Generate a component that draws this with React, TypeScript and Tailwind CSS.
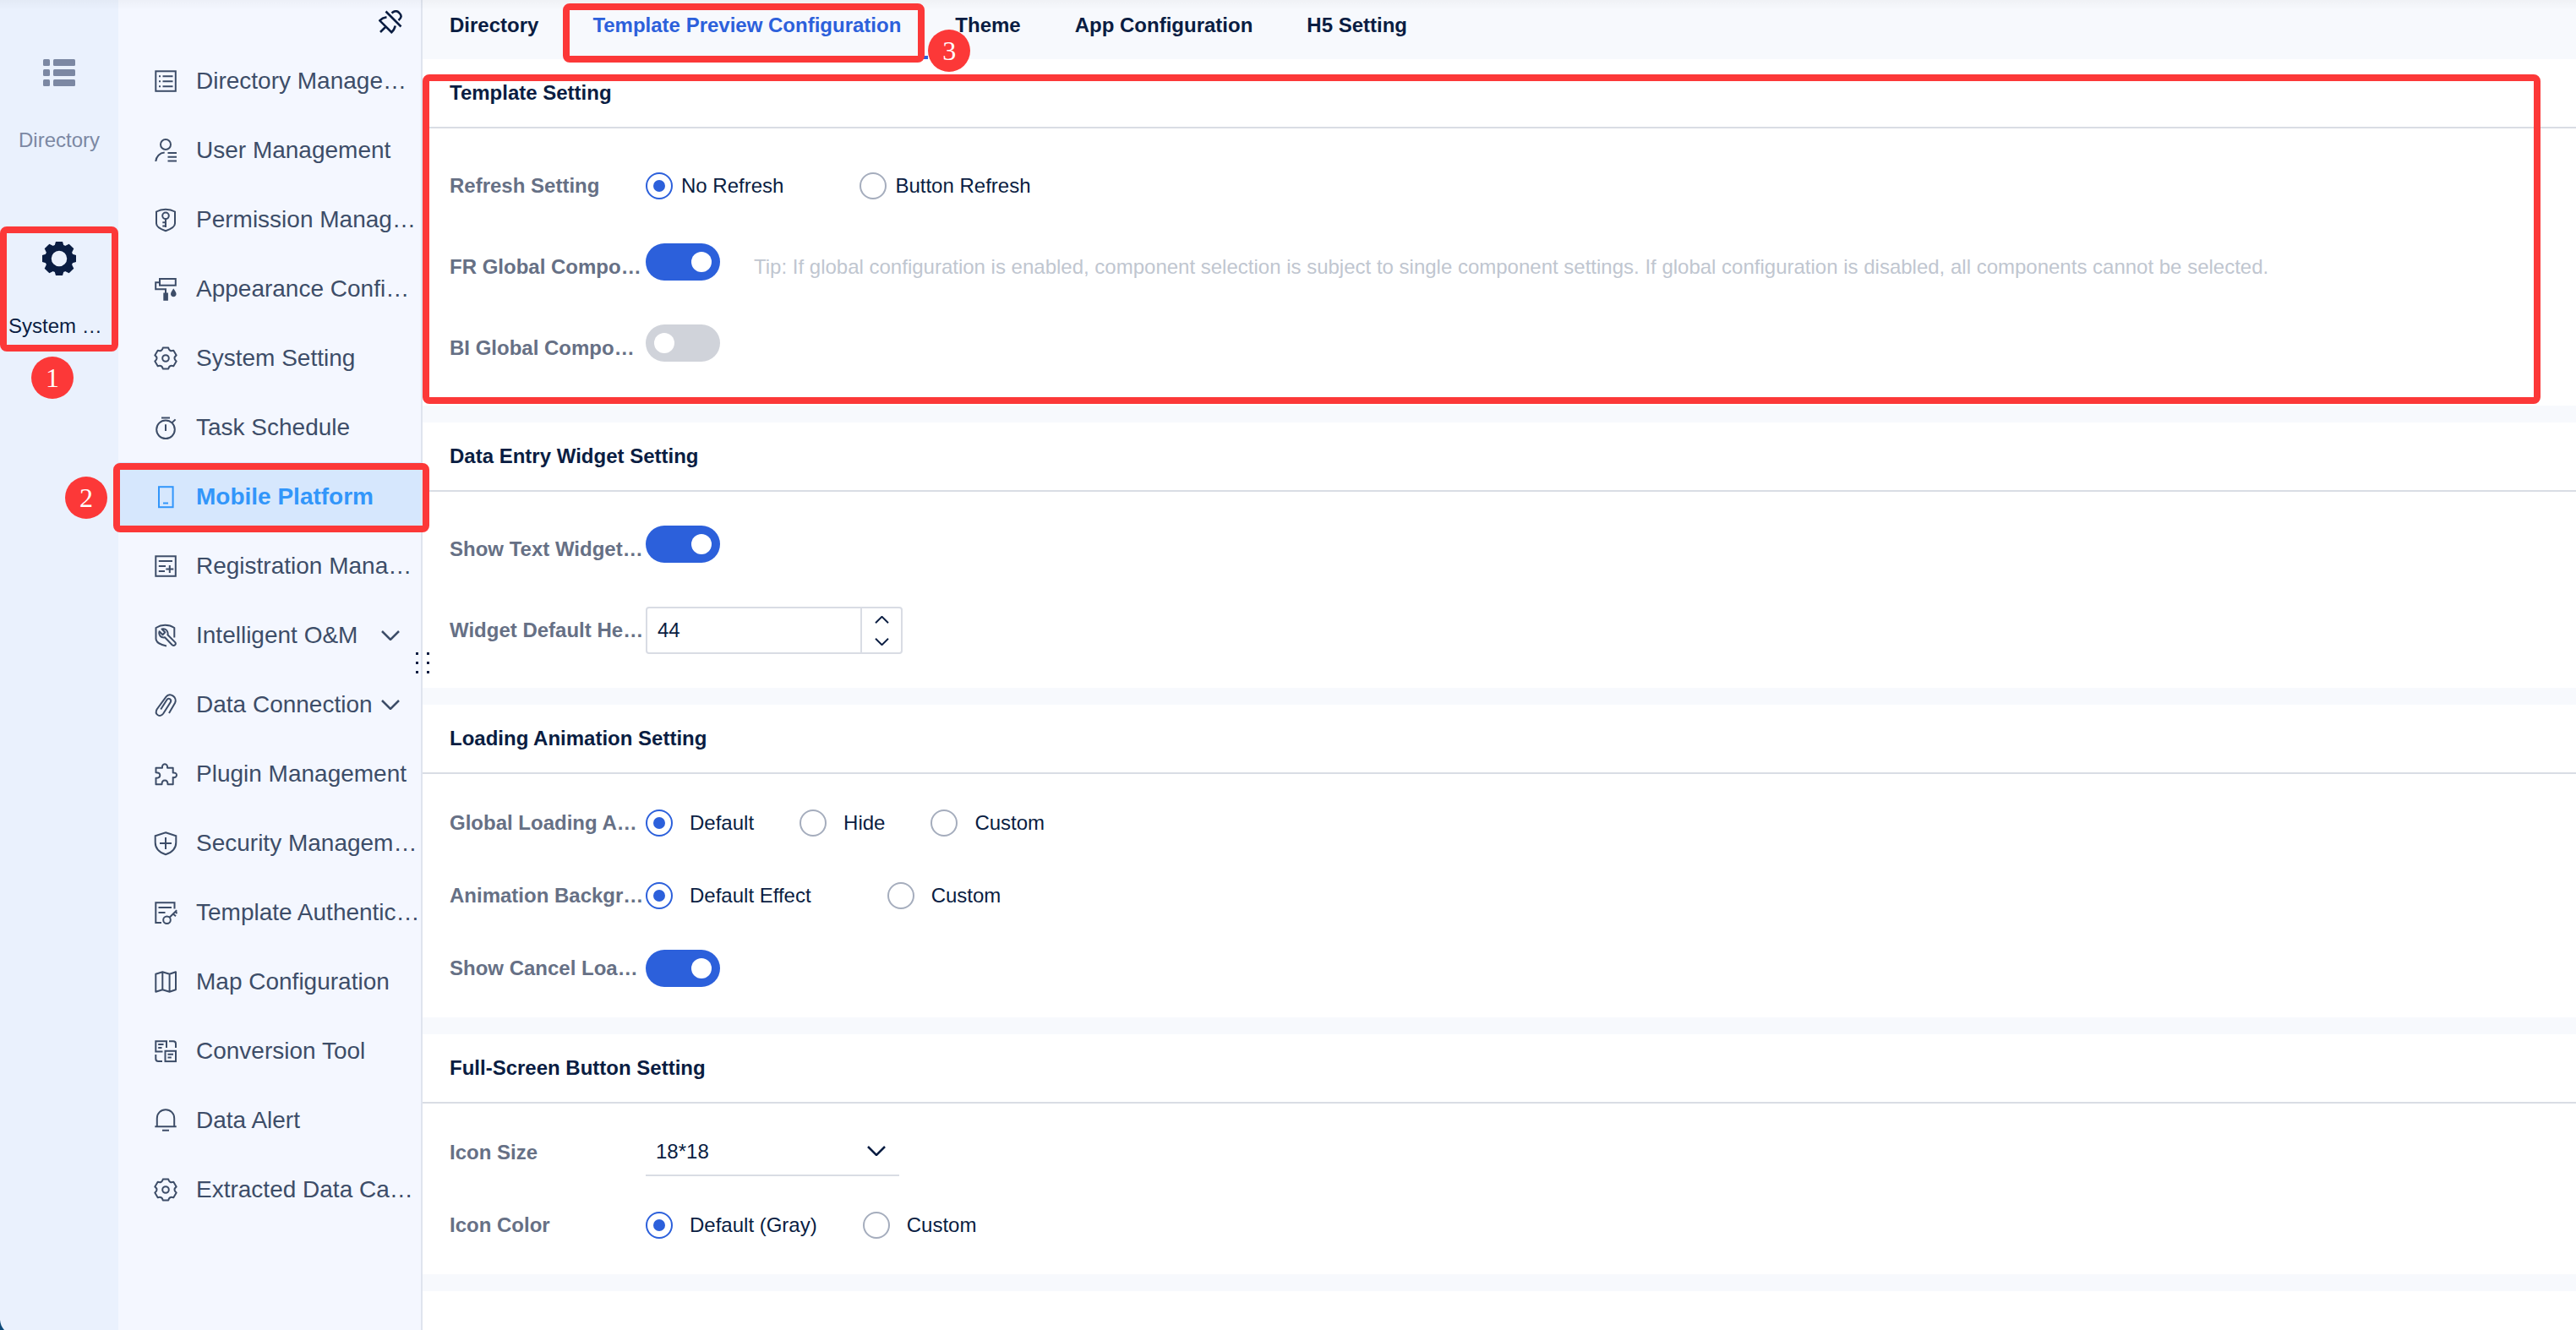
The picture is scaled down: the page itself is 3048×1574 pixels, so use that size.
import { useState } from "react";
import type { ReactNode } from "react";

function Icon({ children }: { children: ReactNode }) {
  return (
    <svg
      viewBox="0 0 26 26"
      fill="none"
      stroke="currentColor"
      strokeWidth="2"
      className="size-[26px] shrink-0 overflow-visible"
      aria-hidden="true"
    >
      {children}
    </svg>
  );
}

const gearOutline = (
  <>
    <path
      strokeLinejoin="round"
      d="M9.8 .5H16.2Q17.2 5.4 22.3 3.7L25.7 9.4Q21.2 13 25.7 16.6L22.3 22.3Q17.2 20.6 16.2 25.5H9.8Q8.8 20.6 3.7 22.3L.3 16.6Q4.8 13 .3 9.4L3.7 3.7Q8.8 5.4 9.8 .5Z"
    />
    <circle cx="13" cy="13" r="3.8" />
  </>
);

interface NavItem {
  label: string;
  icon: ReactNode;
  expandable?: boolean;
}

const navItems: NavItem[] = [
  {
    label: "Directory Manage…",
    icon: (
      <>
        <rect x="1.3" y="1.3" width="23.5" height="23.5" />
        <path d="M5 7.2H7M9.5 7.2H21.5M5 13.2H7M9.5 13.2H21.5M5 19.2H7M9.5 19.2H21.5" />
      </>
    ),
  },
  {
    label: "User Management",
    icon: (
      <>
        <circle cx="13" cy="6" r="6" />
        <path d="M1.3 26C1.8 20 6 16 11.7 15.6M15.5 16H26M15.5 20.8H26M15.5 25.4H26" />
      </>
    ),
  },
  {
    label: "Permission Manag…",
    icon: (
      <>
        <path d="M13 .8C17.5 .8 21 1.8 24 3.5V17.5C24 21.5 19.5 24 13 26.2C6.5 24 2 21.5 2 17.5V3.5C5 1.8 8.5 .8 13 .8Z" />
        <circle cx="13" cy="8.3" r="3.8" />
        <path d="M13 12V22M9.3 16.3H13M9.3 20.5H13" />
      </>
    ),
  },
  {
    label: "Appearance Confi…",
    icon: (
      <>
        <rect x="6" y="1" width="18.8" height="7.7" />
        <path d="M6 5.3H1.2V13.3H13V18" />
        <rect x="10.3" y="17.5" width="5.6" height="9.3" fill="currentColor" stroke="none" />
        <path
          d="M22.3 12.5C24 15 25.6 17 25.6 19C25.6 20.9 24.2 22.3 22.3 22.3C20.4 22.3 19 20.9 19 19C19 17 20.6 15 22.3 12.5Z"
          fill="currentColor"
          stroke="none"
        />
      </>
    ),
  },
  { label: "System Setting", icon: gearOutline },
  {
    label: "Task Schedule",
    icon: (
      <>
        <circle cx="13" cy="15.3" r="10.8" />
        <path d="M8 1.5H18M13 9.3V17M20.5 7.3L24.6 3.4" />
      </>
    ),
  },
  {
    label: "Mobile Platform",
    icon: (
      <>
        <rect x="5" y="1.2" width="16.6" height="24" />
        <path d="M10 20.5H16" />
      </>
    ),
  },
  {
    label: "Registration Mana…",
    icon: (
      <>
        <rect x="1.3" y="1.3" width="23.5" height="23.5" />
        <path d="M4.8 7H21M4.8 13H13M4.8 19H12M13.3 16.5H22.3M17.8 12V21" />
      </>
    ),
  },
  {
    label: "Intelligent O&M",
    expandable: true,
    icon: (
      <g strokeLinejoin="round">
        <path d="M14 25.5C7 24 1.5 21.5 1.5 17V4C5 1.8 8.5 .8 12.3 .8C16.2 .8 20 1.8 23.3 4V15.5" />
        <path d="M8.5 5.5L12.3 9.3L9.5 12.2L5.6 8.3C4.3 12.5 7.5 16.3 12 15.3L20.7 24.3C23 26.3 26.3 23.4 24.2 21.1L15.4 12.3C16.5 8 13 4.3 8.5 5.5Z" />
      </g>
    ),
  },
  {
    label: "Data Connection",
    expandable: true,
    icon: (
      <path d="M17 23L24 11C27.3 4.5 18.3 -2.3 13.5 3.6L2.6 18.5C-.6 24.5 6.3 28.8 10.2 23.5L18.9 9.8C20.3 6.3 16.3 4.2 14.4 7.2L7.2 18.5" />
    ),
  },
  {
    label: "Plugin Management",
    icon: (
      <path
        strokeLinejoin="round"
        d="M1.5 5.7H9C8.7 3 9.8 1.2 12 1.2C14.2 1.2 15.3 3 15 5.7H21.7V11.5C24.2 11.2 26 12.2 26 14.3C26 16.4 24.2 17.4 21.7 17.1V25.2H15.5C15.5 22.2 14.3 20.6 12 20.6C9.7 20.6 8.5 22.2 8.5 25.2H1.5V17.8C4.6 17.8 6.3 16.8 6.3 14.5C6.3 12.2 4.6 11.2 1.5 11.2Z"
      />
    ),
  },
  {
    label: "Security Managem…",
    icon: (
      <path d="M13 .3L25.3 4.2V12C25.3 19 20 24 13 26.3C6 24 .7 19 .7 12V4.2ZM13 6V20M6 13H20" />
    ),
  },
  {
    label: "Template Authentic…",
    icon: (
      <>
        <path d="M23.5 8.5V1.2H1.3V25H8M4.5 7H20M4.5 13H12.5" />
        <circle cx="14.5" cy="21.8" r="4.3" />
        <path d="M17.6 18.7L26.2 10.3M21.8 14.5L25 17.2M24.5 12L26.5 14" />
      </>
    ),
  },
  {
    label: "Map Configuration",
    icon: (
      <path
        strokeLinejoin="round"
        d="M1.3 3.8L9.3 1.3L17.6 3.8L25 1.3V22.3L17.6 24.8L9.3 22.3L1.3 24.8ZM9.3 1.3V22.3M17.6 3.8V24.8"
      />
    ),
  },
  {
    label: "Conversion Tool",
    icon: (
      <>
        <path d="M14 9V1.3H1.3V13.5H9.5M4.2 5H10.5M4.2 9H8.5" />
        <rect x="12.5" y="12.8" width="12.5" height="12.3" />
        <path d="M15.5 16.8H22M15.5 20.6H19.8M17 1.3H22C24 1.3 25 2.3 25 4.3V9M1.3 17V22C1.3 24 2.3 25 4.3 25H9" />
      </>
    ),
  },
  {
    label: "Data Alert",
    icon: (
      <path d="M2.8 20V10.5C2.8 4.5 7.3 .3 13 .3C18.7 .3 23.2 4.5 23.2 10.5V20M.3 20.3H25.7M9 24.8H17" />
    ),
  },
  { label: "Extracted Data Ca…", icon: gearOutline },
];

const tabs = [
  "Directory",
  "Template Preview Configuration",
  "Theme",
  "App Configuration",
  "H5 Setting",
];

function Chevron({ className, up = false }: { className: string; up?: boolean }) {
  return (
    <svg viewBox="0 0 22 12" fill="none" stroke="currentColor" strokeWidth="2.5" className={className} aria-hidden="true">
      <path d={up ? "M1 11L11 1L21 11" : "M1 1L11 11L21 1"} />
    </svg>
  );
}

/* Red callouts laid over the page */
function Outline({ className }: { className: string }) {
  return <div className={`pointer-events-none absolute z-20 rounded-lg border-8 border-[#fc3838] ${className}`} />;
}

function Step({ n, className }: { n: number; className: string }) {
  return (
    <span
      className={`absolute z-20 flex size-[50px] items-center justify-center rounded-full bg-[#fc3838] font-['Liberation_Serif',serif] text-[32px] font-normal leading-none text-white ${className}`}
    >
      {n}
    </span>
  );
}

function Section({ title, children, className = "" }: { title: string; children: ReactNode; className?: string }) {
  return (
    <section className="relative bg-white">
      <h2 className="flex h-[82px] items-center border-b-2 border-[#d9dde4] px-8 font-bold">{title}</h2>
      <div className={className}>{children}</div>
    </section>
  );
}

function Row({ label, htmlFor, tall = false, children }: { label: string; htmlFor?: string; tall?: boolean; children: ReactNode }) {
  const text = "w-[232px] shrink-0 whitespace-nowrap font-bold text-[#667085]";
  return (
    <div className={`flex items-center pl-8 ${tall ? "h-24" : "h-[86px]"}`}>
      {htmlFor ? (
        <label htmlFor={htmlFor} className={text}>{label}</label>
      ) : (
        <span className={text}>{label}</span>
      )}
      {children}
    </div>
  );
}

function Switch({ id, defaultChecked = false }: { id: string; defaultChecked?: boolean }) {
  return (
    <input
      id={id}
      type="checkbox"
      role="switch"
      defaultChecked={defaultChecked}
      className="flex h-11 w-[88px] shrink-0 cursor-pointer appearance-none items-center rounded-full bg-[#d0d3da] px-2.5 before:size-6 before:rounded-full before:bg-white checked:justify-end checked:bg-[#2c60db]"
    />
  );
}

function RadioGroup({ name, options, wide = false, tight = false }: { name: string; options: string[]; wide?: boolean; tight?: boolean }) {
  const [value, setValue] = useState(options[0]);

  return (
    <div className={`flex items-center ${wide ? "gap-[90px]" : "gap-[54px]"}`} role="radiogroup" aria-label={name}>
      {options.map((o) => (
        <label key={o} className={`flex cursor-pointer items-center whitespace-nowrap ${tight ? "gap-2.5" : "gap-5"}`}>
          <input
            type="radio"
            name={name}
            checked={value === o}
            onChange={() => setValue(o)}
            className="flex size-8 appearance-none items-center justify-center rounded-full border-2 border-[#a5adbd] before:size-3.5 before:rounded-full checked:border-[#2c60db] checked:before:bg-[#2c60db]"
          />
          {o}
        </label>
      ))}
    </div>
  );
}

function Rail() {
  return (
    <aside className="flex w-[140px] shrink-0 flex-col gap-[72px] bg-[#eaf1fd] pt-12">
      <a href="#directory" className="flex h-[148px] flex-col items-center gap-10 pt-[18px] text-[#7c88a3]">
        <svg viewBox="0 0 40 40" fill="currentColor" className="size-10" aria-hidden="true">
          {[4, 16, 28].map((y) => (
            <g key={y}>
              <rect x="1" y={y} width="8" height="8" rx="1.5" />
              <rect x="13" y={y} width="26" height="8" rx="1.5" />
            </g>
          ))}
        </svg>
        <span className="leading-10">Directory</span>
      </a>
      <a href="#system" className="relative flex h-[148px] flex-col items-center gap-10 pt-[18px]">
        <svg viewBox="-20 -20 40 40" className="size-10" aria-hidden="true">
          <circle r="13" fill="none" stroke="currentColor" strokeWidth="7.5" />
          {[0, 90, 180, 270].map((a) => (
            <path key={a} d="M-5.5 -15L-4 -20H4L5.5 -15Z" fill="currentColor" transform={`rotate(${a})`} />
          ))}
          {[45, 135, 225, 315].map((a) => (
            <path key={a} d="M-6 -14.5L-4 -20.5H4L6 -14.5Z" fill="currentColor" transform={`rotate(${a})`} />
          ))}
        </svg>
        <span className="w-full px-2.5 leading-10">System …</span>
        <Outline className="inset-0" />
        <Step n={1} className="left-[37px] top-[154px]" />
      </a>
    </aside>
  );
}

function SideNav() {
  return (
    <nav className="relative w-[360px] shrink-0 border-r-2 border-[#dfe4ee] bg-[#f4f7ff]">
      <div className="flex h-[55px] justify-end pr-[22px] pt-3">
        <button type="button" aria-label="Unpin" className="size-7">
          <svg viewBox="0 0 28 28" fill="none" stroke="currentColor" strokeWidth="2.6" className="size-7">
            <path d="M8.5 1.5L26.5 19.5M15.5 3.5C19 .5 22 .5 24.5 3.3C27.5 6.3 27.3 9 23.5 12M9.5 8.3C6.5 8.8 3.5 10 1.3 12.3L15.3 26.2C17.7 24.3 19 21.5 19.7 18.5M2 26L8.7 19.3" />
          </svg>
        </button>
      </div>
      {navItems.map((item) => {
        const active = item.label === "Mobile Platform";
        return (
          <a
            key={item.label}
            href="#nav"
            className={`relative flex h-[82px] items-center whitespace-nowrap pl-[43px] pr-[25px] text-[28px] ${
              active ? "bg-[#d6e7fd] font-bold text-[#3296fa]" : "text-[#3d4d68]"
            }`}
          >
            <Icon>{item.icon}</Icon>
            <span className="ml-[23px]">{item.label}</span>
            {item.expandable && <Chevron className="ml-auto h-3 w-[22px] shrink-0" />}
            {active && (
              <>
                <Outline className="-bottom-px -left-1.5 -right-2.5 top-px" />
                <Step n={2} className="-left-[63px] top-[17px]" />
              </>
            )}
          </a>
        );
      })}
      {/* Resize handle */}
      <div className="absolute -right-2.5 top-[772px] z-10 grid cursor-col-resize grid-cols-2 gap-x-2.5 gap-y-2">
        {[0, 1, 2, 3, 4, 5].map((d) => (
          <span key={d} className="size-[3px] bg-[#0a1d42]" />
        ))}
      </div>
    </nav>
  );
}

export default function App() {
  const [tab, setTab] = useState(tabs[1]);
  const [height, setHeight] = useState(44);

  return (
    <div className="relative flex min-h-screen overflow-hidden bg-[#f7f9fd] font-['Liberation_Sans',Arial,sans-serif] text-2xl text-[#0a1d42]">
      <Rail />
      <SideNav />

      <main className="flex min-w-0 flex-1 flex-col gap-5">
        <div>
          <div className="flex h-[70px]" role="tablist">
            {tabs.map((t) => (
              <button
                key={t}
                type="button"
                role="tab"
                aria-selected={tab === t}
                onClick={() => setTab(t)}
                className={`relative whitespace-nowrap border-b-4 px-8 pb-1.5 font-bold ${
                  tab === t ? "border-[#2c60db] text-[#2c60db]" : "border-transparent"
                }`}
              >
                {t}
                {t === tabs[1] && (
                  <>
                    <Outline className="-bottom-2 -left-[3px] right-1 top-1" />
                    <Step n={3} className="-right-[50px] top-[35px]" />
                  </>
                )}
              </button>
            ))}
          </div>

          <Section title="Template Setting" className="py-5">
            <Row label="Refresh Setting" tall>
              <RadioGroup name="refresh" options={["No Refresh", "Button Refresh"]} wide tight />
            </Row>
            <Row label="FR Global Compo…" htmlFor="fr-global" tall>
              <div className="pb-3">
                <Switch id="fr-global" defaultChecked />
              </div>
              <p className="ml-10 whitespace-nowrap text-[#c0c6d0]">
                Tip: If global configuration is enabled, component selection is subject to single component settings. If global configuration is disabled, all components cannot be selected.
              </p>
            </Row>
            <Row label="BI Global Compo…" htmlFor="bi-global" tall>
              <div className="pb-3">
                <Switch id="bi-global" />
              </div>
            </Row>
            <Outline className="bottom-0.5 left-0 right-[42px] top-[18px]" />
          </Section>
        </div>

        <Section title="Data Entry Widget Setting" className="py-5">
          <Row label="Show Text Widget…" htmlFor="text-widget" tall>
            <div className="pb-3">
              <Switch id="text-widget" defaultChecked />
            </div>
          </Row>
          <Row label="Widget Default He…" htmlFor="widget-height" tall>
            <div className="flex h-14 w-[304px] rounded border-2 border-[#d9dce4]">
              <input
                id="widget-height"
                type="text"
                inputMode="numeric"
                value={height}
                onChange={(e) => setHeight(Number(e.target.value) || 0)}
                className="min-w-0 flex-1 px-3 outline-none"
              />
              <div className="flex w-12 flex-col border-l-2 border-[#d9dce4]">
                <button type="button" aria-label="Increase" onClick={() => setHeight(height + 1)} className="flex flex-1 items-center justify-center">
                  <Chevron up className="h-[9px] w-[17px]" />
                </button>
                <button type="button" aria-label="Decrease" onClick={() => setHeight(height - 1)} className="flex flex-1 items-center justify-center">
                  <Chevron className="h-[9px] w-[17px]" />
                </button>
              </div>
            </div>
          </Row>
        </Section>

        <Section title="Loading Animation Setting" className="py-[15px]">
          <Row label="Global Loading A…">
            <RadioGroup name="loading" options={["Default", "Hide", "Custom"]} />
          </Row>
          <Row label="Animation Backgr…">
            <RadioGroup name="background" options={["Default Effect", "Custom"]} wide />
          </Row>
          <Row label="Show Cancel Loa…" htmlFor="cancel-loading">
            <Switch id="cancel-loading" defaultChecked />
          </Row>
        </Section>

        <Section title="Full-Screen Button Setting" className="py-[15px]">
          <Row label="Icon Size" htmlFor="icon-size">
            <div className="relative w-[300px]">
              <select id="icon-size" className="h-14 w-full appearance-none border-b-2 border-[#d9dde4] px-3 outline-none">
                <option>18*18</option>
              </select>
              <Chevron className="pointer-events-none absolute right-4 top-5 h-3 w-[22px]" />
            </div>
          </Row>
          <Row label="Icon Color">
            <RadioGroup name="color" options={["Default (Gray)", "Custom"]} />
          </Row>
        </Section>

        <div className="flex-1 bg-white" />
      </main>

      {/* Soft shadow cast by the bar above, and the window's rounded corner */}
      <div className="pointer-events-none absolute inset-x-0 top-0 h-3 bg-gradient-to-b from-black/3 to-transparent" />
      <svg viewBox="0 0 5 12" className="absolute bottom-0 left-0 h-3 w-[5px] text-[#0d4a7a]" aria-hidden="true">
        <path d="M0 0C.4 4.5 2 8.5 5 12H0Z" fill="currentColor" />
      </svg>
    </div>
  );
}
